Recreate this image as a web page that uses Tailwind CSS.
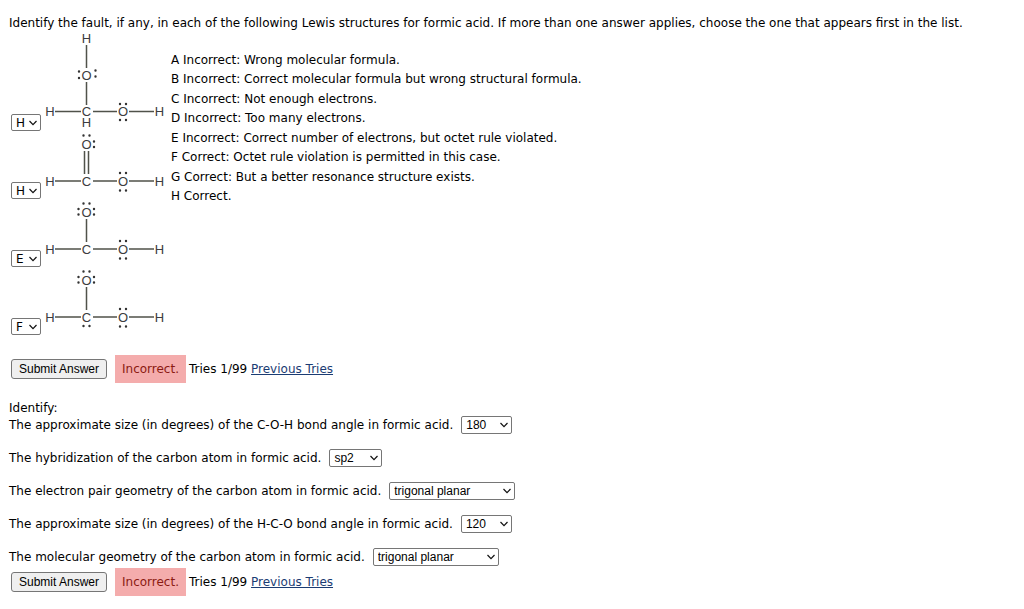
<!DOCTYPE html>
<html lang="en">

<head>
  <meta charset="UTF-8" />
  <meta name="viewport" content="width=device-width, initial-scale=1" />
  <title>Formic acid - Lewis structures</title>
  <script src="https://cdn.jsdelivr.net/npm/@tailwindcss/browser@4"></script>
</head>

<body class="bg-white text-black font-['Verdana','DejaVu_Sans',sans-serif] text-[12px] leading-4">
  <main class="px-2 pt-[15px]">

    <p class="pl-px whitespace-nowrap">Identify the fault, if any, in each of the following Lewis structures for formic acid. If more than one answer applies, choose the one that appears first in the list.</p>

    <form>
      <!-- Structures and list of faults -->
      <div class="flex gap-1.5">
        <div class="flex flex-col pl-[3px]">

          <div class="flex items-end gap-1">
            <div class="relative">
              <select aria-label="Structure 1" class="block appearance-none w-[30px] h-[17px] pl-1 border border-[#767676] rounded-xs bg-white">
                <option>A</option><option>B</option><option>C</option><option>D</option><option>E</option><option>F</option><option>G</option><option selected>H</option>
              </select>
              <svg class="absolute right-1 top-1.5 w-2 h-[6px] pointer-events-none" viewBox="0 0 8 6" fill="none" stroke="#111" stroke-width="1.2"><path d="M0.5 1L4 4.7L7.5 1" /></svg>
            </div>
            <svg class="w-[120px] h-[100px]" viewBox="0 1 120 100" role="img" aria-label="Lewis structure 1" font-family="Liberation Sans, Arial, sans-serif" font-size="13" text-anchor="middle" fill="#3c3c40">
              <g stroke="#50524a" stroke-width="1.5">
                <path d="M10 81.5H36M48 81.5H72M84 81.5H109M41.5 15V38M41.5 52V75" />
              </g>
              <text x="41.5" y="13">H</text>
              <text x="41.5" y="50">O</text>
              <text x="5" y="86">H</text>
              <text x="41.5" y="86">C</text>
              <text x="78" y="86">O</text>
              <text x="114.5" y="86">H</text>
              <text x="41.5" y="97">H</text>
              <path stroke="#333" stroke-width="2.4" stroke-linecap="round" d="M34 41.5h0M34 48h0M50.5 40.5h0M50.5 46.5h0M75 74h0M81 74h0M75 90h0M81 90h0" />
            </svg>
          </div>

          <div class="flex items-end gap-1">
            <div class="relative">
              <select aria-label="Structure 2" class="block appearance-none w-[30px] h-[17px] pl-1 border border-[#767676] rounded-xs bg-white">
                <option>A</option><option>B</option><option>C</option><option>D</option><option>E</option><option>F</option><option>G</option><option selected>H</option>
              </select>
              <svg class="absolute right-1 top-1.5 w-2 h-[6px] pointer-events-none" viewBox="0 0 8 6" fill="none" stroke="#111" stroke-width="1.2"><path d="M0.5 1L4 4.7L7.5 1" /></svg>
            </div>
            <svg class="w-[120px] h-[68px]" viewBox="0 0 120 68" role="img" aria-label="Lewis structure 2" font-family="Liberation Sans, Arial, sans-serif" font-size="13" text-anchor="middle" fill="#3c3c40">
              <g stroke="#50524a" stroke-width="1.5">
                <path d="M10 50H36M48 50H72M84 50H109M39.5 20V43M43.5 20V43" />
              </g>
              <text x="41.5" y="18">O</text>
              <text x="5" y="55">H</text>
              <text x="41.5" y="55">C</text>
              <text x="78" y="55">O</text>
              <text x="114.5" y="55">H</text>
              <path stroke="#333" stroke-width="2.4" stroke-linecap="round" d="M38.5 4.5h0M44.5 4.5h0M49 10.5h0M49 16h0M75 42h0M81 42h0M75 59.5h0M81 59.5h0" />
            </svg>
          </div>

          <div class="flex items-end gap-1">
            <div class="relative">
              <select aria-label="Structure 3" class="block appearance-none w-[30px] h-[17px] pl-1 border border-[#767676] rounded-xs bg-white">
                <option>A</option><option>B</option><option>C</option><option>D</option><option selected>E</option><option>F</option><option>G</option><option>H</option>
              </select>
              <svg class="absolute right-1 top-1.5 w-2 h-[6px] pointer-events-none" viewBox="0 0 8 6" fill="none" stroke="#111" stroke-width="1.2"><path d="M0.5 1L4 4.7L7.5 1" /></svg>
            </div>
            <svg class="w-[120px] h-[68px]" viewBox="0 0 120 68" role="img" aria-label="Lewis structure 3" font-family="Liberation Sans, Arial, sans-serif" font-size="13" text-anchor="middle" fill="#3c3c40">
              <g stroke="#50524a" stroke-width="1.5">
                <path d="M10 50H36M48 50H72M84 50H109M41.5 20V43" />
              </g>
              <text x="41.5" y="18">O</text>
              <text x="5" y="55">H</text>
              <text x="41.5" y="55">C</text>
              <text x="78" y="55">O</text>
              <text x="114.5" y="55">H</text>
              <path stroke="#333" stroke-width="2.4" stroke-linecap="round" d="M38.5 4.5h0M44.5 4.5h0M33.5 10h0M33.5 15.5h0M49 10h0M49 15.5h0M75 42h0M81 42h0M75 59.5h0M81 59.5h0" />
            </svg>
          </div>

          <div class="flex items-end gap-1">
            <div class="relative">
              <select aria-label="Structure 4" class="block appearance-none w-[30px] h-[17px] pl-1 border border-[#767676] rounded-xs bg-white">
                <option>A</option><option>B</option><option>C</option><option>D</option><option>E</option><option selected>F</option><option>G</option><option>H</option>
              </select>
              <svg class="absolute right-1 top-1.5 w-2 h-[6px] pointer-events-none" viewBox="0 0 8 6" fill="none" stroke="#111" stroke-width="1.2"><path d="M0.5 1L4 4.7L7.5 1" /></svg>
            </div>
            <svg class="w-[120px] h-[68px]" viewBox="0 0 120 68" role="img" aria-label="Lewis structure 4" font-family="Liberation Sans, Arial, sans-serif" font-size="13" text-anchor="middle" fill="#3c3c40">
              <g stroke="#50524a" stroke-width="1.5">
                <path d="M10 50H36M48 50H72M84 50H109M41.5 20V43" />
              </g>
              <text x="41.5" y="18">O</text>
              <text x="5" y="55">H</text>
              <text x="41.5" y="55">C</text>
              <text x="78" y="55">O</text>
              <text x="114.5" y="55">H</text>
              <path stroke="#333" stroke-width="2.4" stroke-linecap="round" d="M38.5 4.5h0M44.5 4.5h0M33.5 10h0M33.5 15.5h0M49 10h0M49 15.5h0M75 42h0M81 42h0M75 59.5h0M81 59.5h0M38.5 59h0M44.5 59h0" />
            </svg>
          </div>
        </div>

        <ul class="flex flex-col justify-between h-38 mt-[21px]">
          <li>A Incorrect: Wrong molecular formula.</li>
          <li>B Incorrect: Correct molecular formula but wrong structural formula.</li>
          <li>C Incorrect: Not enough electrons.</li>
          <li>D Incorrect: Too many electrons.</li>
          <li>E Incorrect: Correct number of electrons, but octet rule violated.</li>
          <li>F Correct: Octet rule violation is permitted in this case.</li>
          <li>G Correct: But a better resonance structure exists.</li>
          <li>H Correct.</li>
        </ul>
      </div>

      <div class="flex items-center mt-5 pl-[3px]">
        <button type="button" class="w-24 h-5 border border-[#767676] rounded-[3px] bg-[#efefef] font-['Liberation_Sans',Arial,sans-serif]">Submit Answer</button>
        <span class="ml-2 px-[7px] py-1.5 bg-[#f4acac] text-[#8b1a12]">Incorrect.</span>
        <span class="ml-[3px]">Tries 1/99 <a href="#" class="underline text-[#1b3c73]">Previous Tries</a></span>
      </div>
    </form>

    <!-- Bond angles and geometry -->
    <form class="mt-[17px]">
      <p class="pl-px">Identify:</p>
      <div class="flex flex-col gap-[15px] pl-px">
        <div class="flex items-center gap-2">
          <label for="coh">The approximate size (in degrees) of the C-O-H bond angle in formic acid.</label>
          <div class="relative">
            <select id="coh" class="block appearance-none w-[51px] h-[18px] pl-1 border border-[#767676] rounded-xs bg-white font-['Liberation_Sans',Arial,sans-serif]">
              <option>90</option><option>109</option><option>120</option><option selected>180</option>
            </select>
            <svg class="absolute right-1 top-1.5 w-2 h-[6px] pointer-events-none" viewBox="0 0 8 6" fill="none" stroke="#111" stroke-width="1.2"><path d="M0.5 1L4 4.7L7.5 1" /></svg>
          </div>
        </div>
        <div class="flex items-center gap-2">
          <label for="hybrid">The hybridization of the carbon atom in formic acid.</label>
          <div class="relative">
            <select id="hybrid" class="block appearance-none w-[53px] h-[18px] pl-1 border border-[#767676] rounded-xs bg-white font-['Liberation_Sans',Arial,sans-serif]">
              <option>sp</option><option selected>sp2</option><option>sp3</option>
            </select>
            <svg class="absolute right-1 top-1.5 w-2 h-[6px] pointer-events-none" viewBox="0 0 8 6" fill="none" stroke="#111" stroke-width="1.2"><path d="M0.5 1L4 4.7L7.5 1" /></svg>
          </div>
        </div>
        <div class="flex items-center gap-2">
          <label for="epair">The electron pair geometry of the carbon atom in formic acid.</label>
          <div class="relative">
            <select id="epair" class="block appearance-none w-[126px] h-[18px] pl-1 border border-[#767676] rounded-xs bg-white font-['Liberation_Sans',Arial,sans-serif]">
              <option>linear</option><option selected>trigonal planar</option><option>tetrahedral</option>
            </select>
            <svg class="absolute right-1 top-1.5 w-2 h-[6px] pointer-events-none" viewBox="0 0 8 6" fill="none" stroke="#111" stroke-width="1.2"><path d="M0.5 1L4 4.7L7.5 1" /></svg>
          </div>
        </div>
        <div class="flex items-center gap-2">
          <label for="hco">The approximate size (in degrees) of the H-C-O bond angle in formic acid.</label>
          <div class="relative">
            <select id="hco" class="block appearance-none w-[51px] h-[18px] pl-1 border border-[#767676] rounded-xs bg-white font-['Liberation_Sans',Arial,sans-serif]">
              <option>90</option><option>109</option><option selected>120</option><option>180</option>
            </select>
            <svg class="absolute right-1 top-1.5 w-2 h-[6px] pointer-events-none" viewBox="0 0 8 6" fill="none" stroke="#111" stroke-width="1.2"><path d="M0.5 1L4 4.7L7.5 1" /></svg>
          </div>
        </div>
        <div class="flex items-center gap-2">
          <label for="molgeo">The molecular geometry of the carbon atom in formic acid.</label>
          <div class="relative">
            <select id="molgeo" class="block appearance-none w-[126px] h-[18px] pl-1 border border-[#767676] rounded-xs bg-white font-['Liberation_Sans',Arial,sans-serif]">
              <option>linear</option><option selected>trigonal planar</option><option>tetrahedral</option>
            </select>
            <svg class="absolute right-1 top-1.5 w-2 h-[6px] pointer-events-none" viewBox="0 0 8 6" fill="none" stroke="#111" stroke-width="1.2"><path d="M0.5 1L4 4.7L7.5 1" /></svg>
          </div>
        </div>
      </div>

      <div class="flex items-center mt-0.5 pl-[3px]">
        <button type="button" class="w-24 h-5 border border-[#767676] rounded-[3px] bg-[#efefef] font-['Liberation_Sans',Arial,sans-serif]">Submit Answer</button>
        <span class="ml-2 px-[7px] py-1.5 bg-[#f4acac] text-[#8b1a12]">Incorrect.</span>
        <span class="ml-[3px]">Tries 1/99 <a href="#" class="underline text-[#1b3c73]">Previous Tries</a></span>
      </div>
    </form>

  </main>
</body>

</html>
